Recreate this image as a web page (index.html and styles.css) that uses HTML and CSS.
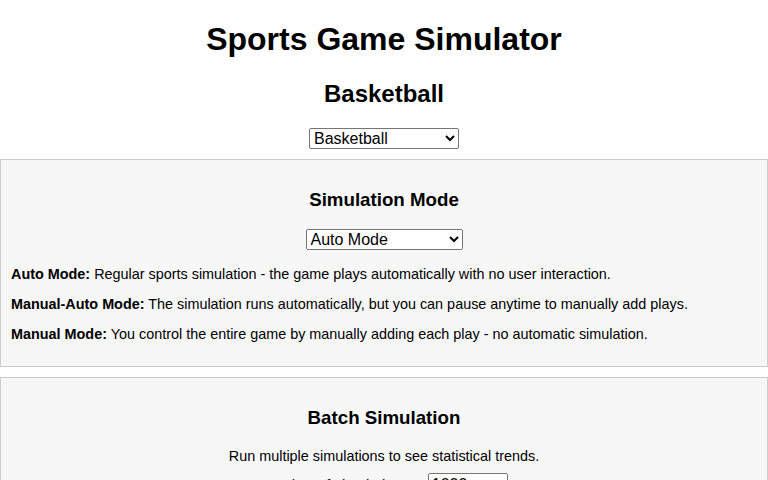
FILE: index.html
```html
<!DOCTYPE html>
<html lang="en">
<head>
    <meta charset="UTF-8">
    <meta name="viewport" content="width=device-width, initial-scale=1.0">
    <title>Sports Game Simulator</title>
    <link rel="stylesheet" href="styles.css">
</head>
<body>
    <h1>Sports Game Simulator</h1>
    <h2 id="sportTitle">Basketball</h2>
    <div class="sport-picker">
        <select id="sportSelect" class="sport-select">
            <option>Basketball</option>
            <option>Football</option>
            <option>Baseball</option>
            <option>Hockey</option>
        </select>
    </div>

    <div class="panel">
        <h3>Simulation Mode</h3>
        <div class="mode-picker">
            <select id="modeSelect" class="mode-select">
                <option>Auto Mode</option>
                <option>Manual-Auto Mode</option>
                <option>Manual Mode</option>
            </select>
        </div>
        <p><strong>Auto Mode:</strong> Regular sports simulation - the game plays automatically with no user interaction.</p>
        <p><strong>Manual-Auto Mode:</strong> The simulation runs automatically, but you can pause anytime to manually add plays.</p>
        <p><strong>Manual Mode:</strong> You control the entire game by manually adding each play - no automatic simulation.</p>
    </div>

    <div class="panel centered">
        <h3>Batch Simulation</h3>
        <p class="hint">Run multiple simulations to see statistical trends.</p>
        <div class="batch-row">
            <label for="numSims">Number of simulations:</label>
            <input type="number" id="numSims" value="1000">
        </div>
        <button id="runBatch">Run Batch</button>
    </div>
</body>
</html>
```

FILE: styles.css
```css
body {
    font-family: "Liberation Sans", Arial, sans-serif;
    color: #000;
    background: #fff;
    margin: 0;
}

h1 {
    text-align: center;
    font-size: 32px;
}

h2 {
    text-align: center;
    font-size: 24px;
}

h3 {
    text-align: center;
    font-size: 18.72px;
}

.sport-picker {
    text-align: center;
    margin-bottom: 10px;
}

.sport-select {
    font-family: inherit;
    font-size: 16px;
    width: 150px;
}

.panel {
    background-color: #f7f7f7;
    border: 1px solid #ccc;
    padding: 10px;
    margin-bottom: 10px;
}

.panel p {
    font-size: 0.9em;
    line-height: 17px;
    margin: 13px 0;
}

.centered {
    text-align: center;
}

.mode-picker {
    text-align: center;
    margin-bottom: 16px;
}

.mode-select {
    font-family: inherit;
    font-size: 16px;
    width: 157px;
}

.panel .hint {
    margin-bottom: 8px;
}

.batch-row {
    font-size: 15px;
    margin: 0 0 10px;
}

.batch-row input {
    font-family: inherit;
    font-size: 16px;
    width: 72px;
    margin-left: 10px;
}
```
